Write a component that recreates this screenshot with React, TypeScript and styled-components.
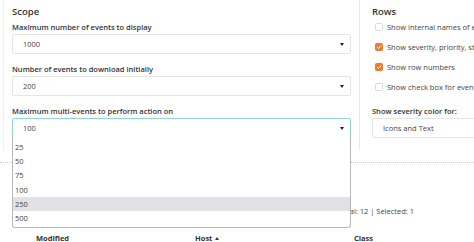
import React from "react";
import styled, { createGlobalStyle } from "styled-components";

const GlobalStyle = createGlobalStyle`
  html, body {
    margin: 0;
    padding: 0;
    background: #ffffff;
  }
  body {
    font-family: "Open Sans", "Liberation Sans", sans-serif;
    color: #333;
  }
`;

const Page = styled.div`
  width: 474px;
  height: 242px;
  overflow: hidden;
`;

const Settings = styled.div`
  display: flex;
  height: 150px;
`;

const ScopePanel = styled.section`
  flex: none;
  width: 339px;
  margin: 0 8px 0 3px;
  padding: 5px 0 0 8px;
  border-left: 1px solid #efefef;
`;

const RowsPanel = styled.section`
  flex: 1;
  min-width: 0;
  overflow: hidden;
  padding: 5px 0 0 12px;
  border-left: 1px solid #e8e8e8;
`;

const Heading = styled.h3`
  margin: 0 0 2px;
  font-size: 9.5px;
  line-height: 14px;
  font-weight: 600;
  color: #333;
`;

const Field = styled.div`
  margin-bottom: 9px;
`;

const Label = styled.div<{ $gap?: number }>`
  font-size: 7.5px;
  line-height: 12px;
  font-weight: 600;
  color: #333;
  margin-top: ${(p) => p.$gap ?? 0}px;
  margin-bottom: 1px;
  white-space: nowrap;
`;

const SelectBox = styled.div<{ $open?: boolean; $width?: number }>`
  position: relative;
  box-sizing: border-box;
  height: 20px;
  width: ${(p) => (p.$width ? `${p.$width}px` : "100%")};
  flex: none;
  display: flex;
  align-items: center;
  justify-content: space-between;
  padding: 0 6px 0 10px;
  border: 1px solid ${(p) => (p.$open ? "#8ed8cd" : "#e5e5e5")};
  border-radius: ${(p) => (p.$open ? "2px 2px 0 0" : "2px")};
  background: #fff;
  font-size: 7.5px;
  color: #444;
  white-space: nowrap;
`;

const Caret = styled.span`
  width: 0;
  height: 0;
  border-left: 2.5px solid transparent;
  border-right: 2.5px solid transparent;
  border-top: 3px solid #222;
`;

const OptionList = styled.ul`
  position: absolute;
  top: 100%;
  left: -1px;
  right: -1px;
  z-index: 2;
  box-sizing: border-box;
  height: 91px;
  margin: 0;
  padding: 3px 0 0;
  list-style: none;
  background: #fff;
  border: 1px solid #b8b8b8;
  border-top: none;
  border-radius: 0 0 3px 3px;
`;

const Option = styled.li<{ $active?: boolean }>`
  height: 14.2px;
  line-height: 14.2px;
  padding-left: 2px;
  font-size: 7.5px;
  color: #444;
  background: ${(p) => (p.$active ? "#e1e1e6" : "transparent")};
`;

const CheckList = styled.div`
  display: flex;
  flex-direction: column;
  gap: 8px;
  padding-left: 3px;
`;

const CheckRow = styled.label`
  display: flex;
  align-items: center;
  gap: 4px;
  height: 12px;
  font-size: 7.5px;
  color: #444;
  white-space: nowrap;
`;

const Box = styled.span<{ $checked?: boolean }>`
  box-sizing: border-box;
  width: 8px;
  height: 8px;
  flex: none;
  display: flex;
  align-items: center;
  justify-content: center;
  border-radius: 1.5px;
  border: 1px solid ${(p) => (p.$checked ? "#f27b2b" : "#dadada")};
  background: ${(p) => (p.$checked ? "#f27b2b" : "#fff")};
`;

const Divider = styled.div`
  margin-top: 12px;
  border-top: 1px dotted #c9c9c9;
`;

const Status = styled.div`
  display: flex;
  justify-content: flex-end;
  padding-right: 60px;
  margin-top: 42px;
  font-size: 7.5px;
  line-height: 12px;
  color: #444;
`;

const HeaderRow = styled.div`
  display: grid;
  grid-template-columns: 159px 159px 1fr;
  padding-left: 36px;
  margin-top: 15px;
  font-size: 7.5px;
  line-height: 12px;
  font-weight: 700;
  color: #333;
`;

const HeaderCell = styled.div`
  display: flex;
  align-items: center;
  gap: 3px;
`;

const SortUp = styled.span`
  width: 0;
  height: 0;
  border-left: 2.5px solid transparent;
  border-right: 2.5px solid transparent;
  border-bottom: 3px solid #333;
`;

const options = ["25", "50", "75", "100", "250", "500"];

const rows = [
  { text: "Show internal names of events", checked: false },
  { text: "Show severity, priority, status", checked: true },
  { text: "Show row numbers", checked: true },
  { text: "Show check box for events", checked: false },
];

const Check = () => (
  <svg width="6" height="6" viewBox="0 0 6 6">
    <path d="M1 3.1 L2.5 4.5 L5 1.5" fill="none" stroke="#fff" strokeWidth="1" />
  </svg>
);

const App = () => {
  return (
    <Page>
      <GlobalStyle />
      <Settings>
        <ScopePanel>
          <Heading>Scope</Heading>
          <Field>
            <Label>Maximum number of events to display</Label>
            <SelectBox>
              1000
              <Caret />
            </SelectBox>
          </Field>
          <Field>
            <Label>Number of events to download initially</Label>
            <SelectBox>
              200
              <Caret />
            </SelectBox>
          </Field>
          <Field>
            <Label>Maximum multi-events to perform action on</Label>
            <SelectBox $open>
              100
              <Caret />
              <OptionList>
                {options.map((o) => (
                  <Option key={o} $active={o === "250"}>
                    {o}
                  </Option>
                ))}
              </OptionList>
            </SelectBox>
          </Field>
        </ScopePanel>
        <RowsPanel>
          <Heading>Rows</Heading>
          <CheckList>
            {rows.map((r) => (
              <CheckRow key={r.text}>
                <Box $checked={r.checked}>{r.checked && <Check />}</Box>
                {r.text}
              </CheckRow>
            ))}
          </CheckList>
          <Label $gap={12}>Show severity color for:</Label>
          <SelectBox $width={140}>Icons and Text</SelectBox>
        </RowsPanel>
      </Settings>
      <Divider />
      <Status>Total: 12 | Selected: 1</Status>
      <HeaderRow>
        <HeaderCell>Modified</HeaderCell>
        <HeaderCell>
          Host <SortUp />
        </HeaderCell>
        <HeaderCell>Class</HeaderCell>
      </HeaderRow>
    </Page>
  );
};

export default App;
